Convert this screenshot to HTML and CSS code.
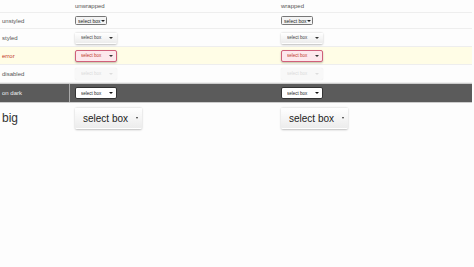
FILE: index.html
```html
<!DOCTYPE html>
<html lang="en">

<head>
    <meta charset="UTF-8">
    <title>Select boxes</title>
    <link rel="stylesheet" href="styles.css">
</head>

<body>
    <div class="table">
        <div class="row head">
            <div class="label"></div>
            <div class="cell">unwrapped</div>
            <div class="cell">wrapped</div>
        </div>

        <div class="row plain">
            <div class="label">unstyled</div>
            <div class="cell"><span class="native-wrap"><select class="native"><option>select box</option></select></span></div>
            <div class="cell"><span class="native-wrap"><select class="native"><option>select box</option></select></span></div>
        </div>

        <div class="row styled-row">
            <div class="label">styled</div>
            <div class="cell"><span class="select-wrap"><select class="select"><option>select box</option></select></span></div>
            <div class="cell"><span class="select-wrap"><select class="select"><option>select box</option></select></span></div>
        </div>

        <div class="row styled-row error">
            <div class="label">error</div>
            <div class="cell"><span class="select-wrap"><select class="select"><option>select box</option></select></span></div>
            <div class="cell"><span class="select-wrap"><select class="select"><option>select box</option></select></span></div>
        </div>

        <div class="row styled-row disabled">
            <div class="label">disabled</div>
            <div class="cell"><span class="select-wrap"><select class="select" disabled><option>select box</option></select></span></div>
            <div class="cell"><span class="select-wrap"><select class="select" disabled><option>select box</option></select></span></div>
        </div>

        <div class="row styled-row dark">
            <div class="label">on dark</div>
            <div class="cell"><span class="select-wrap"><select class="select"><option>select box</option></select></span></div>
            <div class="cell"><span class="select-wrap"><select class="select"><option>select box</option></select></span></div>
        </div>

        <div class="row big">
            <div class="label">big</div>
            <div class="cell"><span class="select-wrap"><select class="select"><option>select box</option></select></span></div>
            <div class="cell"><span class="select-wrap"><select class="select"><option>select box</option></select></span></div>
        </div>
    </div>
</body>

</html>
```

FILE: styles.css
```css
body {
    margin: 0;
    font-family: "Liberation Sans", Arial, sans-serif;
    background-color: #fdfdfd;
    color: #555;
}

.table {
    width: 472px;
}

.row {
    display: grid;
    grid-template-columns: 70px 206px 1fr;
    align-items: center;
    border-bottom: 1px solid #eee;
    font-size: 6px;
}

.row > div {
    height: 100%;
    display: flex;
    align-items: center;
}

.head {
    height: 12px;
}

.label {
    padding-left: 2px;
}

.cell {
    padding-left: 5px;
}

.plain {
    height: 15px;
}

.styled-row {
    height: 17px;
}

.error {
    background-color: #fffde6;
}

.error .label {
    color: #c0392b;
}

.dark {
    background-color: #5b5b5b;
    border-bottom-color: #ccc;
    border-top: 1px solid #ccc;
    height: 18px;
}

.dark .label {
    color: #eee;
    border-right: 1px solid #aaa;
}

.big {
    height: 30px;
    border-bottom: none;
}

.big .label {
    font-size: 12px;
    color: #333;
}

/* unstyled select, drawn small like the browser one */
.native-wrap {
    position: relative;
    display: inline-block;
}

.native-wrap:after {
    content: "";
    position: absolute;
    right: 2px;
    top: 50%;
    margin-top: -1px;
    border-left: 2px solid transparent;
    border-right: 2px solid transparent;
    border-top: 2.5px solid #222;
    pointer-events: none;
}

.native {
    -webkit-appearance: none;
    appearance: none;
    font-family: "Liberation Sans", Arial, sans-serif;
    font-size: 5px;
    width: 32px;
    height: 9px;
    padding: 0 0 0 2px;
    margin: 0;
    color: #222;
    border: 1px solid #777;
    border-radius: 1.5px;
    background: #f4f4f4;
    outline: none;
}

/* styled select */
.select-wrap {
    position: relative;
    display: inline-block;
}

.select-wrap:after {
    content: "";
    position: absolute;
    right: 4px;
    top: 50%;
    margin-top: -1px;
    border-left: 2px solid transparent;
    border-right: 2px solid transparent;
    border-top: 2.5px solid #333;
    pointer-events: none;
}

.select {
    -webkit-appearance: none;
    appearance: none;
    font-family: "Liberation Sans", Arial, sans-serif;
    font-size: 4.5px;
    color: #444;
    width: 42px;
    height: 12px;
    margin: 0;
    padding: 0 0 0 5px;
    border: 1px solid transparent;
    border-radius: 2px;
    background: linear-gradient(#fff, #ececec);
    box-shadow: 0 1px 2px rgba(0, 0, 0, 0.25);
    outline: none;
}

.error .select {
    border-color: #d0607a;
    background: #fde8ec;
    color: #c0392b;
}

.disabled .select {
    color: #ccc;
    background: #f7f7f7;
    box-shadow: 0 0 1px rgba(0, 0, 0, 0.15);
}

.disabled .select-wrap:after {
    border-top-color: #ddd;
}

.dark .select {
    background: #fff;
    border-color: #333;
    box-shadow: none;
    color: #222;
}

.dark .select-wrap:after {
    border-top-color: #111;
}

.big .select {
    font-size: 10px;
    width: 67px;
    height: 22px;
    padding-left: 7px;
    color: #222;
}

.big .select-wrap:after {
    right: 4px;
    border-left-width: 1.5px;
    border-right-width: 1.5px;
    border-top-width: 2px;
}
```
